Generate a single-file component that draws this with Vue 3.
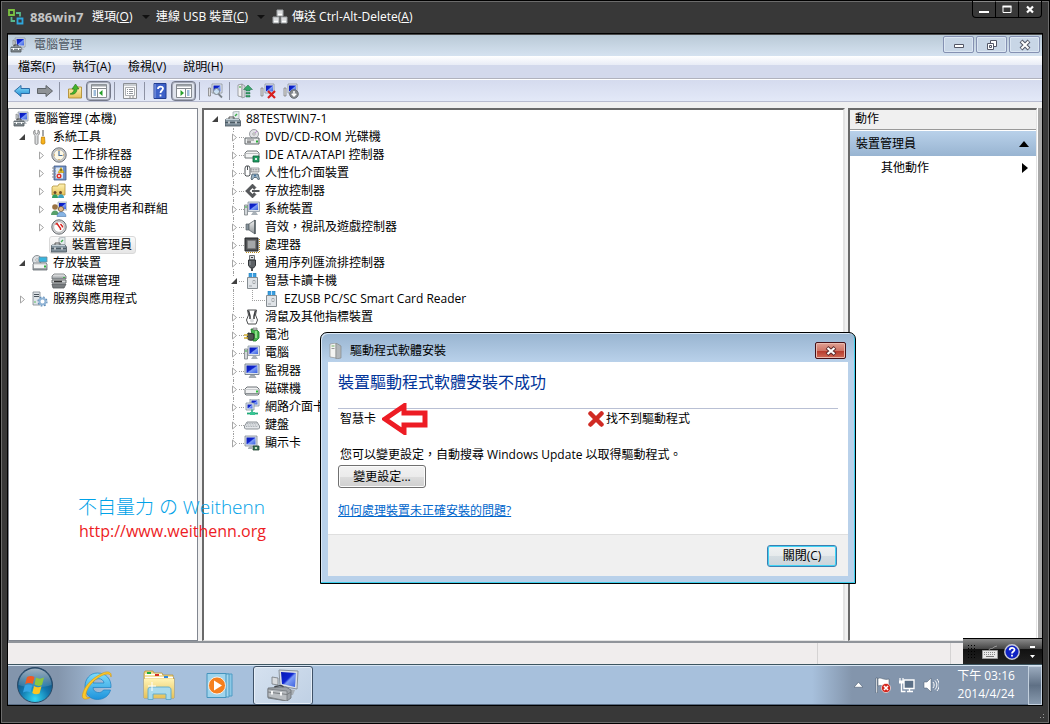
<script setup>
const tree = [
  { icon: 'compmgmt', text: '電腦管理 (本機)', level: 0 },
  { icon: 'tools', text: '系統工具', level: 1, arrow: 'open' },
  { icon: 'clock', text: '工作排程器', level: 2, arrow: 'shut' },
  { icon: 'event', text: '事件檢視器', level: 2, arrow: 'shut' },
  { icon: 'shared', text: '共用資料夾', level: 2, arrow: 'shut' },
  { icon: 'users', text: '本機使用者和群組', level: 2, arrow: 'shut' },
  { icon: 'perf', text: '效能', level: 2, arrow: 'shut' },
  { icon: 'devmgr', text: '裝置管理員', level: 2, selected: true },
  { icon: 'storage', text: '存放裝置', level: 1, arrow: 'open' },
  { icon: 'diskmgmt', text: '磁碟管理', level: 2 },
  { icon: 'services', text: '服務與應用程式', level: 1, arrow: 'shut' }
]
const devices = [
  { icon: 'devmgr', text: '88TESTWIN7-1', level: 0, arrow: 'open' },
  { icon: 'dvd', text: 'DVD/CD-ROM 光碟機', level: 1, arrow: 'shut' },
  { icon: 'ide', text: 'IDE ATA/ATAPI 控制器', level: 1, arrow: 'shut' },
  { icon: 'hid', text: '人性化介面裝置', level: 1, arrow: 'shut' },
  { icon: 'storctl', text: '存放控制器', level: 1, arrow: 'shut' },
  { icon: 'pc', text: '系統裝置', level: 1, arrow: 'shut' },
  { icon: 'sound', text: '音效，視訊及遊戲控制器', level: 1, arrow: 'shut' },
  { icon: 'cpu', text: '處理器', level: 1, arrow: 'shut' },
  { icon: 'usb', text: '通用序列匯流排控制器', level: 1, arrow: 'shut' },
  { icon: 'reader', text: '智慧卡讀卡機', level: 1, arrow: 'open' },
  { icon: 'reader', text: 'EZUSB PC/SC Smart Card Reader', level: 2 },
  { icon: 'mouse', text: '滑鼠及其他指標裝置', level: 1, arrow: 'shut' },
  { icon: 'battery', text: '電池', level: 1, arrow: 'shut' },
  { icon: 'pc', text: '電腦', level: 1, arrow: 'shut' },
  { icon: 'monitor', text: '監視器', level: 1, arrow: 'shut' },
  { icon: 'disk', text: '磁碟機', level: 1, arrow: 'shut' },
  { icon: 'network', text: '網路介面卡', level: 1, arrow: 'shut' },
  { icon: 'keyboard', text: '鍵盤', level: 1, arrow: 'shut' },
  { icon: 'display', text: '顯示卡', level: 1, arrow: 'shut', last: true }
]
const menus = ['檔案(F)', '執行(A)', '檢視(V)', '說明(H)']
const tools = [
  { icon: 'back', label: '上一頁' },
  { icon: 'forward', label: '下一頁' },
  { sep: true },
  { icon: 'folderup', label: '上移一層' },
  { icon: 'paneleft', label: '顯示或隱藏主控台樹狀目錄', on: true },
  { sep: true },
  { icon: 'props', label: '內容' },
  { sep: true },
  { icon: 'help', label: '說明' },
  { icon: 'paneright', label: '顯示或隱藏執行窗格', on: true },
  { sep: true },
  { icon: 'scan', label: '掃描硬體變更' },
  { sep: true },
  { icon: 'update', label: '更新驅動程式' },
  { icon: 'uninstall', label: '解除安裝' },
  { icon: 'disable', label: '停用' }
]
const apps = [
  { icon: 'ie', label: 'Internet Explorer' },
  { icon: 'explorer', label: '檔案總管' },
  { icon: 'wmp', label: 'Windows Media Player' },
  { icon: 'mmc', label: '電腦管理', on: true }
]
</script>

<template>
  <div class="viewer">
    <svg class="defs" aria-hidden="true">
      <defs>
        <linearGradient id="g-scr" x1="0" y1="0" x2="1" y2="1"><stop offset="0" stop-color="#0618b4" /><stop offset=".45" stop-color="#1026d0" /><stop offset=".55" stop-color="#7d9cf4" /><stop offset="1" stop-color="#3a60e0" /></linearGradient>
        <linearGradient id="g-metal" x1="0" y1="0" x2="0" y2="1"><stop offset="0" stop-color="#f4f4f4" /><stop offset="1" stop-color="#8c9296" /></linearGradient>
        <linearGradient id="g-fold" x1="0" y1="0" x2="0" y2="1"><stop offset="0" stop-color="#fff3b4" /><stop offset="1" stop-color="#e6c158" /></linearGradient>
        <linearGradient id="g-blue" x1="0" y1="0" x2="0" y2="1"><stop offset="0" stop-color="#8fdcf8" /><stop offset="1" stop-color="#1b8fd6" /></linearGradient>
        <radialGradient id="g-orb" cx=".5" cy=".9" r=".9"><stop offset="0" stop-color="#33d8f4" /><stop offset=".45" stop-color="#1277ae" /><stop offset="1" stop-color="#153a5e" /></radialGradient>
        <linearGradient id="g-gloss" x1="0" y1="0" x2="0" y2="1"><stop offset="0" stop-color="#fff" stop-opacity=".6" /><stop offset="1" stop-color="#fff" stop-opacity=".1" /></linearGradient>
        <linearGradient id="g-ie" x1="0" y1="0" x2="0" y2="1"><stop offset="0" stop-color="#7fdcfa" /><stop offset="1" stop-color="#1d93dc" /></linearGradient>
      </defs>

      <symbol id="i-compmgmt" viewBox="0 0 16 16"><path d="M5 1h10v9H6z" fill="#dfe5ea" stroke="#8c97a2" stroke-width=".8" /><path d="M6.500 2h7.500v6.500H7z" fill="url(#g-scr)" /><path d="M3 3l2 1v5l-2-1z" fill="#cfd4d8" stroke="#777" stroke-width=".6" /><path d="M9 10h3l2 3H9z" fill="#b5bcc2" /><path d="M4 9.500V8h4v1.500" fill="none" stroke="#444" /><path d="M1 10h10v5H1z" fill="#7b8489" stroke="#535a5f" stroke-width=".8" /><path d="M1 11.500h10" stroke="#d5dadc" /><path d="M3.500 11v2M8.500 11v2" stroke="#fff" /></symbol>
      <symbol id="i-tools" viewBox="0 0 16 16"><path d="M3 1L3 4l1.500 1L6 4V1c2 1 2 4 0 5.500V14c0 2-3 2-3 0V6.500C1 5 1 2 3 1z" fill="#dadcde" stroke="#777" stroke-width=".8" /><path d="M11 1v6" stroke="#888" stroke-width="1.500" /><path d="M9.500 8h3l.5 6c0 1.500-4 1.500-4 0z" fill="#f7b21c" stroke="#b97a00" stroke-width=".7" /></symbol>
      <symbol id="i-clock" viewBox="0 0 16 16"><circle cx="8" cy="8" r="7.200" fill="#c9cccf" stroke="#707579" /><circle cx="8" cy="8" r="5.300" fill="#fdf8e4" stroke="#999" stroke-width=".6" /><path d="M8 4v4.500h3.500" fill="none" stroke="#4870a0" stroke-width="1.200" /><path d="M8 3v1M8 12v1M3 8h1M12 8h1" stroke="#c58a30" /></symbol>
      <symbol id="i-event" viewBox="0 0 16 16"><path d="M3 1h12v14H3z" fill="#6f92c8" stroke="#3c5784" stroke-width=".8" /><path d="M4.500 2.500h7.500v11H4.500z" fill="#dbe6f6" /><path d="M1 3h4M1 6h4M1 9h4M1 12h4" stroke="#838a92" /><path d="M10 2.500l2.800 5H7.200z" fill="#ffd928" stroke="#b68a00" stroke-width=".6" /><path d="M10 4v2.500" stroke="#222" /><circle cx="8" cy="11" r="2.500" fill="#e03226" /><path d="M7 10l2 2m0-2l-2 2" stroke="#fff" stroke-width=".8" /></symbol>
      <symbol id="i-shared" viewBox="0 0 16 16"><path d="M1 4l1-1h5l1-2h6v11H1z" fill="url(#g-fold)" stroke="#b2943c" stroke-width=".8" /><circle cx="4" cy="9.500" r="1.500" fill="#6b4a28" /><circle cx="9.500" cy="9.500" r="1.500" fill="#6b4a28" /><path d="M1 15c0-5 6-5 6 0z" fill="#2f9e62" /><path d="M7 15c0-5 6-5 6 0z" fill="#3aa0bd" /></symbol>
      <symbol id="i-users" viewBox="0 0 16 16"><path d="M7 1h9v8H7z" fill="#dfe5ea" stroke="#8c97a2" stroke-width=".6" /><path d="M8 2h7v6H8z" fill="url(#g-scr)" /><circle cx="4" cy="6" r="2.800" fill="#9b7443" /><path d="M0 14c0-6 8-6 8 0z" fill="#58a06a" /><circle cx="10" cy="8" r="2.600" fill="#dfb98a" stroke="#6b4a28" stroke-width=".7" /><path d="M6 15.500c0-6 9-6 9 0z" fill="#86b4e4" stroke="#4c78ae" stroke-width=".6" /></symbol>
      <symbol id="i-perf" viewBox="0 0 16 16"><circle cx="8" cy="8" r="7.200" fill="#d2d4d6" stroke="#686c70" /><circle cx="8" cy="8" r="5.300" fill="#fff" stroke="#999" stroke-width=".6" /><path d="M4.500 5.500l1.500-1 3.500 5V11M9.500 5l2 2.500v1" fill="none" stroke="#d6201c" stroke-width="1.400" /></symbol>
      <symbol id="i-devmgr" viewBox="0 0 16 16"><path d="M8 1l6-1v8H8z" fill="#e5ebee" stroke="#9aa3a8" stroke-width=".7" /><path d="M12 3l-2 2" stroke="#3cae48" stroke-width="1.500" /><path d="M4 8V6h5v2" fill="none" stroke="#555" /><path d="M1 8h13l1.500 2v5H0v-5z" fill="#7d8d98" stroke="#46535c" stroke-width=".8" /><path d="M1 8.500h13" stroke="#c4d0d8" stroke-width="1.200" /><path d="M0 11.500h15" stroke="#4d5b64" /><path d="M4 10.500v2M11 10.500v2" stroke="#fff" stroke-width="1.300" /></symbol>
      <symbol id="i-storage" viewBox="0 0 16 16"><circle cx="5" cy="5" r="4.500" fill="#dde1e4" stroke="#8a9095" /><circle cx="5" cy="5" r="1.300" fill="#fff" stroke="#888" stroke-width=".6" /><path d="M7 2h8v5H7z" fill="#3ab4de" stroke="#6e8894" stroke-width=".8" /><path d="M1 9l1-1h12l1 1v6H1z" fill="url(#g-metal)" stroke="#666d72" stroke-width=".8" /><path d="M2 10h12v3H2z" fill="#f3f4f4" /><path d="M12 11.500h2" stroke="#31b33c" stroke-width="2" /></symbol>
      <symbol id="i-diskmgmt" viewBox="0 0 16 16"><path d="M1 3l2-2h10l2 2v3H1z" fill="url(#g-metal)" stroke="#6b6f72" stroke-width=".8" /><path d="M1 7h14v3H1z" fill="#d5d7d8" stroke="#54585b" stroke-width=".8" /><path d="M3 8.500h8" stroke="#333" stroke-width="1.500" /><path d="M1 11l1 4h11l2-4z" fill="#787c7f" stroke="#54585b" stroke-width=".8" /><path d="M12 4.500h2" stroke="#42b649" /></symbol>
      <symbol id="i-services" viewBox="0 0 16 16"><path d="M1 1h7v13H1z" fill="#dfe4e8" stroke="#7d868e" stroke-width=".8" /><path d="M2 3.500h5M2 5.500h5" stroke="#49535c" /><path d="M2.500 11h1" stroke="#31b33c" stroke-width="1.500" /><circle cx="10.500" cy="10.500" r="3" fill="#fff" stroke="#8fb3d5" stroke-width="2" /><circle cx="10.500" cy="10.500" r="4.500" fill="none" stroke="#5f8db8" stroke-width="1.200" stroke-dasharray="1.800 1.730" /></symbol>
      <symbol id="i-dvd" viewBox="0 0 16 16"><circle cx="10" cy="5" r="4.500" fill="#e2e2e6" stroke="#85898e" stroke-width=".8" /><path d="M10 5l3-3" stroke="#c58fd6" /><circle cx="10" cy="5" r="1.200" fill="#fff" stroke="#777" stroke-width=".6" /><path d="M1 9h14v6H1z" fill="#eceeef" stroke="#5c6266" /><path d="M3 11h7" stroke="#888" /><path d="M3 13h4" stroke="#333" /><path d="M12 12.500h2" stroke="#24ac30" stroke-width="2" /></symbol>
      <symbol id="i-ide" viewBox="0 0 16 16"><path d="M1 6l2-2h10l2 2v5H1z" fill="#f2f3f3" stroke="#73787b" /><path d="M1 6.500h14" stroke="#babdbf" /><path d="M9 9h6v6H9z" fill="#1f9d62" stroke="#0e5e38" stroke-width=".8" /><path d="M11 11h2v2h-2z" fill="#d7e8de" /></symbol>
      <symbol id="i-hid" viewBox="0 0 16 16"><path d="M2 1h3l1 2v7l-1 1H2l-1-1V3z" fill="#fff" stroke="#4e5357" /><path d="M3.500 1v4" stroke="#4e5357" /><path d="M7 3h8v4H7z" fill="#eee" stroke="#7b7f82" stroke-width=".7" /><path d="M7.500 4.500h7M7.500 6h7" stroke="#6b6f72" stroke-width=".7" stroke-dasharray="1 .6" /><path d="M7 14l1-5h6l1.500 5-1 1-2-2.500h-2.500L8 15z" fill="#9bb4c4" stroke="#455763" stroke-width=".8" /><circle cx="11" cy="10.500" r="1" fill="#3c6c9c" /></symbol>
      <symbol id="i-storctl" viewBox="0 0 16 16"><path d="M12 4.500L8.500 1 1.500 8l7 7 3.500-3.500L10.200 9.500 8.500 11.300 5.200 8l3.300-3.300 1.700 1.800z" fill="#55585b" stroke="#303335" stroke-width=".5" /><path d="M8 7h7.500v2H8z" fill="#55585b" /></symbol>
      <symbol id="i-pc" viewBox="0 0 16 16"><path d="M4 1h11.500v9.500H4z" fill="#dce2e8" stroke="#8c97a2" stroke-width=".8" /><path d="M5.500 2.500h8.500v6.500H5.500z" fill="url(#g-scr)" /><path d="M9 11h3l2 3H7z" fill="#a9b1b8" /><path d="M.5 4h3v10h-3z" fill="#d3d7da" stroke="#7a8084" stroke-width=".8" /><path d="M1 6h2" stroke="#31b33c" /></symbol>
      <symbol id="i-sound" viewBox="0 0 16 16"><path d="M2 5h3v6H2z" fill="#85919a" stroke="#596168" stroke-width=".7" /><path d="M5 5l6-4v14l-6-4z" fill="url(#g-metal)" stroke="#5c656b" stroke-width=".8" /><path d="M11 1v14" stroke="#3f484e" stroke-width="1.200" /></symbol>
      <symbol id="i-cpu" viewBox="0 0 16 16"><path d="M2 15.500h13.500V2" fill="none" stroke="#b88b1c" stroke-dasharray="1 1" /><path d="M1 1h13v13H1z" fill="#4e5154" stroke="#232527" /><path d="M3.500 3.500h8v8h-8z" fill="#a4a7a9" stroke="#777" stroke-width=".6" /></symbol>
      <symbol id="i-usb" viewBox="0 0 16 16"><path d="M5.500.5h5V5h-5z" fill="#dadcdd" stroke="#6b6f72" /><path d="M7 2.500h2" stroke="#444" /><path d="M4.500 5h7v5.500L9.500 13h-3l-2-2.500z" fill="#5d6266" stroke="#2e3235" /><path d="M6 6v4" stroke="#9a9fa3" /><path d="M8 13v3" stroke="#4a4e51" stroke-width="2" /></symbol>
      <symbol id="i-reader" viewBox="0 0 16 16"><path d="M5 0h7v6H5z" fill="#3a9ee0" stroke="#2478b2" stroke-width=".6" /><path d="M8.500 0v5" stroke="#bfe4ff" /><path d="M3.500 4.500h10V15.500h-10z" fill="#dfe3e7" stroke="#858c91" /><path d="M9 7.500h2v3H9z" fill="#fff" stroke="#7a8186" stroke-width=".6" /><path d="M5 13h3" stroke="#9ba1a6" /></symbol>
      <symbol id="i-mouse" viewBox="0 0 16 16"><path d="M3.500 1h9L11.500 6l2 5-1.500 4H4l-1.500-4 2-5z" fill="#fff" stroke="#4d4f51" /><path d="M4.500 1.500L6 7v3M11.500 1.500L10 7v3" fill="none" stroke="#3a3c3e" stroke-width="1.500" /><circle cx="8" cy="11.500" r="2" fill="#d9dbdd" /></symbol>
      <symbol id="i-battery" viewBox="0 0 16 16"><path d="M7 2h5l3 3v6l-3 3H9z" fill="#45b44c" stroke="#1d7327" stroke-width=".8" /><path d="M9 1h4v2H9z" fill="#c9ccce" stroke="#666" stroke-width=".6" /><path d="M12 4v7" stroke="#a5ea9c" stroke-width="1.500" /><path d="M4 6l6 1v4c0 3-6 3-7 0z" fill="#4f5552" stroke="#242826" /><path d="M0 8h4M0 11h4" stroke="#d2ad30" stroke-width="1.300" /></symbol>
      <symbol id="i-monitor" viewBox="0 0 16 16"><path d="M1 1h14v10.500H1z" fill="#dce2e8" stroke="#7e8993" /><path d="M2.500 2.500h11V10h-11z" fill="url(#g-scr)" /><path d="M7 12h3l2 2.500H5z" fill="#a9b1b8" stroke="#858d94" stroke-width=".6" /></symbol>
      <symbol id="i-disk" viewBox="0 0 16 16"><path d="M1 8l2-2h10l2 2v5l-1 1H2l-1-1z" fill="#f0f1f2" stroke="#6d7276" /><path d="M1 8.500h14" stroke="#c9cccf" /><path d="M1 12.500h14" stroke="#8b9094" /><path d="M12 10.500h2" stroke="#2cc239" stroke-width="2" /></symbol>
      <symbol id="i-network" viewBox="0 0 16 16"><path d="M6 0h9v7H6z" fill="#e4e9ee" stroke="#8290a0" stroke-width=".8" /><path d="M7.500 1.500h6v4h-6z" fill="url(#g-scr)" /><path d="M2 4h8v7H2z" fill="#e4e9ee" stroke="#8290a0" stroke-width=".8" /><path d="M3.500 5.500h5v4h-5z" fill="url(#g-scr)" /><path d="M3 14.500h11" stroke="#20a878" stroke-width="1.800" /><path d="M8 10.500v3" stroke="#20a878" stroke-width="1.500" /><path d="M6 13h5v3H6z" fill="#38c494" /></symbol>
      <symbol id="i-keyboard" viewBox="0 0 16 16"><path d="M3 5h10l2.500 4v2l-1 1H1.500l-1-1V9z" fill="#e4e7ea" stroke="#72797f" stroke-width=".8" /><path d="M3 6.500h10M2.500 8h11M2 9.500h12" stroke="#979ea4" stroke-width=".8" stroke-dasharray="1 .7" /></symbol>
      <symbol id="i-display" viewBox="0 0 16 16"><path d="M1 1h12v10H1z" fill="#dce2e8" stroke="#7e8993" stroke-width=".8" /><path d="M2.500 2.500h9v7h-9z" fill="url(#g-scr)" /><path d="M4 13l2-2h2v3H4z" fill="#a9b1b8" /><path d="M9 11h6v4H9z" fill="#3d7a5c" stroke="#1e3f2f" stroke-width=".8" /><path d="M11 12h2v2h-2z" fill="#c9e5c0" /></symbol>

      <symbol id="i-back" viewBox="0 0 16 16"><path d="M.5 8L7 2.500v3h8.500v5H7v3z" fill="url(#g-blue)" stroke="#2c6ca6" /></symbol>
      <symbol id="i-forward" viewBox="0 0 16 16"><path d="M15.500 8L9 2.500v3H.5v5H9v3z" fill="#8e9296" stroke="#5f6468" /></symbol>
      <symbol id="i-folderup" viewBox="0 0 16 16"><path d="M1.500 6h5l1-2h7v11h-13z" fill="url(#g-fold)" stroke="#b08f36" stroke-width=".9" /><path d="M3 11c3-1 4-3 4-5H5l3.500-5L12 6h-2c0 4-3 6-7 5z" fill="#43b32c" stroke="#277417" stroke-width=".6" /></symbol>
      <symbol id="i-paneleft" viewBox="0 0 16 16"><path d="M.5 1.500h15v13H.5z" fill="#fff" stroke="#868b90" /><path d="M1 2.500h14" stroke="#9ba0a6" stroke-width="2" /><path d="M1 5.500h14" stroke="#868b90" /><path d="M6.500 6v8" stroke="#868b90" /><path d="M2.500 8h2.500M2.500 10h2.500M2.500 12h2.500" stroke="#3d78b4" /><path d="M11.500 7v6L8 10z" fill="#28a02c" /></symbol>
      <symbol id="i-paneright" viewBox="0 0 16 16"><path d="M.5 1.500h15v13H.5z" fill="#fff" stroke="#868b90" /><path d="M1 2.500h14" stroke="#9ba0a6" stroke-width="2" /><path d="M1 5.500h14" stroke="#868b90" /><path d="M9.500 6v8" stroke="#868b90" /><path d="M11 8h2.500M11 10h2.500M11 12h2.500" stroke="#3d78b4" /><path d="M4.500 7v6L8 10z" fill="#28a02c" /></symbol>
      <symbol id="i-props" viewBox="0 0 16 16"><path d="M1.500.5h13v15h-13z" fill="#f8f8f8" stroke="#8c9095" /><path d="M2 2h12" stroke="#c9cdd1" stroke-width="2" /><path d="M3.500 4.500h9v8h-9z" fill="#fff" stroke="#9a9ea2" stroke-width=".8" /><path d="M5 6.500h1M5 8.500h1M5 10.500h1M7 6.500h4M7 8.500h4M7 10.500h4" stroke="#8f949a" /><path d="M7 14h2M10 14h2" stroke="#888" /></symbol>
      <symbol id="i-help" viewBox="0 0 16 16"><path d="M2 .5h12v15H2z" fill="#3c61c8" stroke="#233f92" /><path d="M3 1v14" stroke="#8fa6e6" stroke-width="1" /><path d="M6 6c0-3 5-3 5-.5 0 2-2.500 2-2.500 4.500" fill="none" stroke="#fff" stroke-width="1.800" /><path d="M7.600 11.500h1.800v2H7.600z" fill="#fff" /></symbol>
      <symbol id="i-scan" viewBox="0 0 16 16"><path d="M5 1h10v9H5z" fill="#e5e9ee" stroke="#8a939c" stroke-width=".8" /><path d="M6.500 2.500h7V8.500h-7z" fill="url(#g-scr)" /><path d="M1.500 5h2v8h-2z" fill="#ddd" stroke="#777" stroke-width=".7" /><circle cx="9.500" cy="8.500" r="3" fill="#cfe6f6" fill-opacity=".85" stroke="#7a828a" /><path d="M11.500 11l3.500 3.500" stroke="#7a828a" stroke-width="1.800" /></symbol>
      <symbol id="i-update" viewBox="0 0 16 16"><path d="M1 2l4-1v13l-4-1z" fill="#f3f3f3" stroke="#8a8e92" stroke-width=".8" /><path d="M5 1l3 2v11l-3 1z" fill="#d4d7d9" stroke="#8a8e92" stroke-width=".7" /><path d="M2 4h2" stroke="#28a02c" /><path d="M11 2l4.500 4.500H13V8H9V6.500H6.500zM9 9.500h4V11H9zM9 12.500h4V14H9z" fill="#35a86a" stroke="#1c6a40" stroke-width=".5" /></symbol>
      <symbol id="i-uninstall" viewBox="0 0 16 16"><path d="M5 1h9v9H5z" fill="#e5e9ee" stroke="#8a939c" stroke-width=".8" /><path d="M6 2.500h7V8.500H6z" fill="url(#g-scr)" /><path d="M1 5h2v8H1z" fill="#ddd" stroke="#777" stroke-width=".7" /><path d="M8 8l7 7m0-7l-7 7" stroke="#d81e1e" stroke-width="2.200" /></symbol>
      <symbol id="i-disable" viewBox="0 0 16 16"><path d="M5 1h9v9H5z" fill="#e5e9ee" stroke="#8a939c" stroke-width=".8" /><path d="M6 2.500h7V8.500H6z" fill="url(#g-scr)" /><path d="M1 5h2v8H1z" fill="#ddd" stroke="#777" stroke-width=".7" /><circle cx="11" cy="11" r="4.300" fill="#85898e" stroke="#6a6f74" /><path d="M11 8v5M8.800 10.800l2.200 2.200 2.200-2.200" fill="none" stroke="#fff" stroke-width="1.500" /></symbol>

      <symbol id="i-ie" viewBox="0 0 32 32"><path d="M16.500 4C25 4 30.500 10 30 18.500H12c.3 6 8.500 6.500 10.500 2.500h7C28 27 22.500 30.500 16.500 30.500 9 30.500 4 25 4 17.500S9 4 16.500 4zM12 14h11c-.5-5.500-10-6-11 0z" fill="url(#g-ie)" stroke="#1b7fc2" stroke-width=".7" fill-rule="evenodd" /><path d="M30 8c1.500-6-5-6.500-11-2.500C10 10 3 18 1.500 25.500c-1 5.500 3.500 5.500 7.500 3-3 .5-4.500-.5-4-3.500C6 18.500 12 11.500 20 7c5-2.500 9.500-3.500 10 1z" fill="#fbc82a" stroke="#d6970c" stroke-width=".6" /></symbol>
      <symbol id="i-explorer" viewBox="0 0 32 32"><path d="M1 4l1-2h8l1 2h8l1 2h10v3h1v20H1V4z" fill="#f0d682" stroke="#b9963c" stroke-width=".8" /><path d="M2 5.500h17M2 8.500h28" stroke="#fff" stroke-width="1.500" /><path d="M4 3h4v2H4z" fill="#1fae3a" /><path d="M12 5h4v2h-4z" fill="#d63024" /><path d="M21 7h4v2h-4z" fill="#3289dc" /><path d="M1 10h30v19H1z" fill="url(#g-fold)" /><path d="M5 30.500V21c0-2 1-3 3-3h17c2 0 3 1 3 3v9.500h-5V25H10v5.500z" fill="#a4daf2" stroke="#5ba9cc" stroke-width=".9" fill-opacity=".95" /><path d="M9 13v9M5 17h8" stroke="#fff" /></symbol>
      <symbol id="i-wmp" viewBox="0 0 32 32"><path d="M10 5h17v22H10z" fill="#8cc8e6" stroke="#4f9cc4" /><path d="M7 5h17v23H7z" fill="#a4d7ee" stroke="#4f9cc4" /><path d="M2 4.500h19v24H2z" fill="#9fd4ec" stroke="#4494bd" /><circle cx="12" cy="16.500" r="8.500" fill="#f5801f" stroke="#fff" stroke-width=".8" /><path d="M9 11.500l8 5-8 5z" fill="#fff" /></symbol>
      <symbol id="i-mmc" viewBox="0 0 32 32"><path d="M12 1l19 1-1 18-17-3z" fill="#dde1e6" stroke="#8a929a" /><path d="M14 3l15 1-1 14-13-3z" fill="url(#g-scr)" /><path d="M5 8l6 1v7l-6-1z" fill="#d8dbde" stroke="#74797e" stroke-width=".8" /><path d="M20 20l8 1-2 5h-6z" fill="#a9afb5" /><path d="M8 19.500v-2l6-1 2 1v2" fill="none" stroke="#44484c" stroke-width="1.400" /><path d="M1 19l18-1 5 3v8l-4 3-19-3z" fill="#9da2a7" stroke="#6a6f74" stroke-width=".8" /><path d="M1 20l19 2v10L1 28z" fill="#b9bdc1" stroke="#74797e" stroke-width=".8" /><path d="M1 23l19 2.500 4-2.500" fill="none" stroke="#7a7e82" /><path d="M5 22v3.500M14 23v3.500" stroke="#fff" stroke-width="1.800" /></symbol>
    </svg>

    <header class="vbar">
      <svg class="vlogo" viewBox="0 0 16 16"><path d="M1 1h5v5H1z" fill="none" stroke="#7cc242" stroke-width="1.800" /><path d="M9.500 9.500h5v5h-5z" fill="none" stroke="#2fa6dc" stroke-width="1.800" /><path d="M3.500 8v4H7M8 4h4v3.500" fill="none" stroke="#59b98a" stroke-width="1.800" /></svg>
      <strong class="vname">886win7</strong>
      <button class="vmenu vopt" type="button">選項(<u>O</u>)</button>
      <svg class="vtri" viewBox="0 0 8 4"><path d="M0 0h8L4 4z" /></svg>
      <button class="vmenu vusb" type="button">連線 USB 裝置(<u>C</u>)</button>
      <svg class="vtri" viewBox="0 0 8 4"><path d="M0 0h8L4 4z" /></svg>
      <svg class="vkeys" viewBox="0 0 16 16"><path d="M5 1h6v6H5zM1 8h6v6H1zM9 8h6v6H9z" fill="#d9dbdd" stroke="#a0a4a7" /><path d="M6 5.500h4M2 12.500h4M10 12.500h4" stroke="#fff" stroke-width="1.500" /></svg>
      <button class="vmenu vcad" type="button">傳送 Ctrl-Alt-Delete(<u>A</u>)</button>
      <div class="vctl">
        <button type="button" aria-label="最小化"><svg viewBox="0 0 12 12"><path d="M1 7h10v2H1z" fill="#fff" /></svg></button>
        <button type="button" aria-label="最大化"><svg viewBox="0 0 12 12"><path d="M2 2.500h8v6H2z" fill="none" stroke="#fff" /><path d="M1.500 2.500h9" stroke="#fff" stroke-width="2" /></svg></button>
        <button type="button" aria-label="關閉"><svg viewBox="0 0 12 12"><path d="M3 2.500l6 6m0-6l-6 6" stroke="#fff" stroke-width="2.200" /></svg></button>
      </div>
    </header>

    <main class="screen">
      <div class="ctitle">
        <svg class="ic"><use href="#i-compmgmt" /></svg>
        <span class="cname">電腦管理</span>
        <div class="cctl">
          <button type="button" aria-label="最小化"><svg viewBox="0 0 14 12"><path d="M2.500 5.500h9v3h-9z" fill="#fff" stroke="#535666" /></svg></button>
          <button type="button" aria-label="還原"><svg viewBox="0 0 14 12"><path d="M5.500 1.500h6v6h-6z" fill="#fff" stroke="#535666" /><path d="M2.500 4.500h6v6h-6z" fill="#fff" stroke="#535666" /><path d="M4.500 6.500h2v2h-2z" fill="none" stroke="#535666" /></svg></button>
          <button type="button" aria-label="關閉"><svg viewBox="0 0 14 12"><path d="M3 2l8 8m0-8l-8 8" stroke="#535666" stroke-width="4" /><path d="M3.500 2.500l7 7m0-7l-7 7" stroke="#fff" stroke-width="2" /></svg></button>
        </div>
      </div>
      <nav class="menubar"><button v-for="m in menus" :key="m" type="button">{{ m }}</button></nav>
      <div class="toolbar">
        <template v-for="(t, i) in tools" :key="i">
          <i v-if="t.sep" class="sep"></i>
          <button v-else type="button" :class="{ on: t.on }" :aria-label="t.label"><svg class="ic"><use :href="'#i-' + t.icon" /></svg></button>
        </template>
      </div>

      <div class="panes">
        <section class="pane left">
          <div v-for="(n, i) in tree" :key="i" class="node" :class="'l' + n.level">
            <span v-if="n.level" class="slot">
              <svg v-if="n.arrow === 'shut'" viewBox="0 0 8 9"><path d="M2.500 1v7l4-3.500z" fill="#fff" stroke="#a5a5a5" /></svg>
              <svg v-else-if="n.arrow" viewBox="0 0 8 9"><path d="M7 1v6H1z" fill="#404040" /></svg>
            </span>
            <span class="lab" :class="{ sel: n.selected }"><svg class="ic"><use :href="'#i-' + n.icon" /></svg>{{ n.text }}</span>
          </div>
        </section>

        <section class="pane mid">
          <div v-for="(n, i) in devices" :key="i" class="node" :class="['l' + n.level, { last: n.last }]">
            <span class="slot">
              <svg v-if="n.arrow === 'shut'" viewBox="0 0 8 9"><path d="M2.500 1v7l4-3.500z" fill="#fff" stroke="#a5a5a5" /></svg>
              <svg v-else-if="n.arrow" viewBox="0 0 8 9"><path d="M7 1v6H1z" fill="#404040" /></svg>
            </span>
            <span class="lab"><svg class="ic"><use :href="'#i-' + n.icon" /></svg>{{ n.text }}</span>
          </div>
        </section>

        <aside class="pane right">
          <div class="ahead">動作</div>
          <button class="agroup" type="button">裝置管理員<svg viewBox="0 0 10 6"><path d="M5 0l5 6H0z" /></svg></button>
          <button class="aitem" type="button">其他動作<svg viewBox="0 0 6 10"><path d="M0 0l6 5-6 5z" /></svg></button>
        </aside>
        <div class="strip"></div>
      </div>
      <div class="status"><i></i><i></i></div>

      <footer class="taskbar">
        <button class="orb" type="button" aria-label="開始">
          <svg viewBox="0 0 38 38"><circle cx="19" cy="19" r="17.500" fill="url(#g-orb)" stroke="#2c4a66" /><path d="M2.500 19a16.500 16.500 0 0133 0c-8 3-25 3-33 0z" fill="url(#g-gloss)" /><path d="M11 11c2.500-1.500 5-1.500 7.500 0l-1.800 7c-2.500-1.500-5-1.500-7.500 0z" fill="#ee5a24" /><path d="M20 11.500c2.500 1.500 5 1.500 8 0l-2 7.500c-2.500 1.500-5 1-7.500-.5z" fill="#8cc63e" /><path d="M8.800 19.500c2.500-1.500 5-1.500 7.500 0l-1.800 7c-2.500-1.500-5-1.500-7.500 0z" fill="#36a5e4" /><path d="M18 20c2.500 1.500 5 1.500 7.500.3l-2 7.200c-2.500 1.200-5 1-7.200-.5z" fill="#fdc520" /></svg>
        </button>
        <button v-for="a in apps" :key="a.icon" class="app" :class="{ on: a.on }" type="button" :aria-label="a.label"><svg><use :href="'#i-' + a.icon" /></svg></button>
        <div class="tray">
          <svg class="t-up" viewBox="0 0 8 5"><path d="M4 0l4 4.500H0z" fill="#fff" stroke="#46586c" stroke-width=".5" /></svg>
          <svg class="t-ic" viewBox="0 0 16 16"><path d="M1 1h1.500v15H1z" fill="#fff" stroke="#3a4a5c" stroke-width=".5" /><path d="M3 1.500c4-1.500 5 2 11 .5v7C9 11 7 7 3 9z" fill="#fff" stroke="#3a4a5c" stroke-width=".5" /><circle cx="11" cy="11" r="4.600" fill="#d3261c" stroke="#fff" stroke-width=".6" /><path d="M9 9l4 4m0-4l-4 4" stroke="#fff" stroke-width="1.600" /></svg>
          <svg class="t-ic" viewBox="0 0 16 16"><path d="M5 3h10v8.500H5z" fill="#5b6f86" stroke="#fff" stroke-width="1.400" /><path d="M8 14.500h6M10.500 12v3" stroke="#fff" stroke-width="1.400" /><path d="M1 1v3M4 1v3" stroke="#fff" stroke-width="1.200" /><path d="M0 3.500h5v3H0z" fill="#fff" /><path d="M2.500 6v8.500h4" fill="none" stroke="#fff" stroke-width="1.300" /></svg>
          <svg class="t-ic" viewBox="0 0 16 16"><path d="M1 5h3l4-4v14l-4-4H1z" fill="#fff" stroke="#4a5b6d" stroke-width=".5" /><path d="M10 5c1.500 2 1.500 4 0 6M12 3.500c2.500 3 2.500 6 0 9M14 2c3 4 3 8 0 12" fill="none" stroke="#fff" /></svg>
          <div class="time"><span>下午 03:16</span><span>2014/4/24</span></div>
          <button class="peek" type="button" aria-label="顯示桌面"></button>
        </div>
      </footer>

      <div class="langbar">
        <i class="grip"></i>
        <svg class="kb" viewBox="0 0 16 16"><path d="M7 7c0-4 3-1 5-4l3-1" fill="none" stroke="#999" /><path d="M.5 6.500h15v8H.5z" fill="#e8e8e8" stroke="#999" /><path d="M2 8.500h12M2 10.500h12" stroke="#888" stroke-dasharray="1 1" /><path d="M4 12.500h8" stroke="#777" /></svg>
        <svg class="hp" viewBox="0 0 16 16"><circle cx="8" cy="8" r="7.200" fill="#0f22c4" stroke="#c9cbd8" stroke-width="1.400" /><path d="M5.700 6.300c0-3.200 4.800-3 4.800-.5C10.500 7.500 8 7.500 8 9.500" fill="none" stroke="#fff" stroke-width="1.800" /><path d="M7.100 10.800h1.800v1.800H7.100z" fill="#fff" /></svg>
        <svg class="mn" viewBox="0 0 8 14"><path d="M1 1h5v2H1zM1 10h5l-2.500 3z" fill="#fff" /></svg>
      </div>

      <div class="mark"><span>不自量力 の Weithenn</span><a href="#">http://www.weithenn.org</a></div>

      <div class="dialog" role="dialog" aria-labelledby="dlg-title">
        <div class="dbar">
          <svg class="ic" viewBox="0 0 16 16"><path d="M2 1l6-1v15l-6-1z" fill="#f4f4f2" stroke="#8f9294" stroke-width=".7" /><path d="M8 0l5 3v12l-5 1z" fill="#b2b6b9" stroke="#85898b" stroke-width=".7" /><path d="M3.500 3h3" stroke="#70b060" /><path d="M3.500 5.500h3" stroke="#999" /></svg>
          <span id="dlg-title">驅動程式軟體安裝</span>
          <button type="button" aria-label="關閉"><svg viewBox="0 0 14 12"><path d="M3 2.500l8 7m0-7l-8 7" stroke="#5a2a2a" stroke-width="4" /><path d="M3.500 3l7 6m0-6l-7 6" stroke="#fff" stroke-width="2.200" /></svg></button>
        </div>
        <div class="dbody">
          <h1>裝置驅動程式軟體安裝不成功</h1>
          <div class="drow">
            <span class="dev">智慧卡<svg viewBox="0 0 46 32"><path d="M3 16L22 3v7h21v12H22v7z" fill="#fff" stroke="#ed1c24" stroke-width="5" /></svg></span>
            <span class="res"><svg viewBox="0 0 16 16"><path d="M2.500 2.500l11 11m0-11l-11 11" stroke="#d02b24" stroke-width="4.500" stroke-linecap="round" /></svg>找不到驅動程式</span>
          </div>
          <p>您可以變更設定，自動搜尋 Windows Update 以取得驅動程式。</p>
          <button class="chg" type="button">變更設定...</button>
          <a class="how" href="#">如何處理裝置未正確安裝的問題?</a>
        </div>
        <div class="dfoot"><button type="button">關閉(C)</button></div>
      </div>
    </main>
  </div>
</template>

<style>
body { background: #383838; }
</style>

<style scoped>
.viewer, .viewer * { box-sizing: border-box; }
.viewer {
  min-height: 100vh;
  display: flex;
  flex-direction: column;
  padding: 0 7px 18px;
  background: #383838;
  border: 1px solid #000;
  box-shadow: inset 0 0 0 1px #6c6c6c;
  font: 12px/18px "Open Sans", "Noto Sans CJK TC", sans-serif;
  color: #000;
  position: relative;
}
.viewer::after {
  content: "";
  position: absolute;
  right: 3px;
  bottom: 3px;
  width: 10px;
  height: 10px;
  background: radial-gradient(#999 1px, transparent 1px) 0 0 / 3px 3px;
  clip-path: polygon(100% 0, 100% 100%, 0 100%);
}
.defs { position: absolute; width: 0; height: 0; }
svg { flex: none; display: block; }
button { font: inherit; color: inherit; border: 0; background: none; padding: 0; margin: 0; white-space: nowrap; }
.ic { width: 16px; height: 16px; }

.vbar { height: 33px; display: flex; align-items: center; color: #fff; border-bottom: 1px solid #000; }
.vlogo { width: 16px; height: 16px; }
.vname { font-size: 13px; color: #c4c4c4; margin-left: 6px; width: 62px; }
.vopt { width: 48px; text-align: left; }
.vusb { width: 100px; text-align: left; margin-left: 8px; }
.vusb + .vtri { margin-left: 1px; }
.vtri { width: 8px; height: 4px; fill: #111; }
.vopt + .vtri { margin-left: 2px; margin-right: -2px; }
.vkeys { width: 16px; height: 16px; margin: 0 4px 0 7px; }
.vctl { margin-left: auto; align-self: flex-start; display: flex; border: 1px solid #000; border-top: 0; border-radius: 0 0 4px 4px; }
.vctl button { width: 22px; height: 16px; display: flex; justify-content: center; align-items: center; border-top: 1px solid #888; }
.vctl button + button { border-left: 1px solid #000; width: 23px; }
.vctl svg { width: 12px; height: 12px; }

.screen { flex: 1; display: flex; flex-direction: column; position: relative; background: #f0f0f0; border-top: 1px solid #4a4a4a; outline: 1px solid #000; }
.ctitle { height: 21px; display: flex; align-items: center; background: linear-gradient(#b9c9d6, #d5e2f0); padding: 0 2px 2px; }
.cname { margin-left: 8px; color: #4f5964; }
.cctl { margin-left: auto; display: flex; gap: 2px; }
.cctl button { width: 31px; height: 17px; border: 1px solid #8591b2; border-radius: 2px; background: #c8d6e6; box-shadow: inset 0 0 0 1px #dbe6f2; display: flex; align-items: center; justify-content: center; }
.cctl svg { width: 14px; height: 12px; }
.menubar { height: 23px; display: flex; gap: 17px; align-items: center; padding: 0 10px; background: linear-gradient(#fff, #e8ecf6 9px, #d3d9ec 9px); border-bottom: 1px solid #b0b2bd; }
.toolbar { height: 23px; display: flex; align-items: center; padding: 1px 2px 0; background: linear-gradient(#fff 1px, #d5dbee 1px, #e3e9f8); border-bottom: 1px solid #b8bcd0; }
.toolbar button { width: 23px; height: 20px; display: flex; align-items: center; justify-content: center; }
.toolbar button.on { width: 25px; border: 1px solid #74798a; border-radius: 4px; background: #dfe3ec; box-shadow: inset 0 0 0 1px #a4a9b8; }
.toolbar .sep { width: 1px; height: 18px; background: #8d92a4; margin: 0 3px; }

.panes { flex: 1; display: flex; padding-top: 6px; border-bottom: 2px solid #90949a; }
.pane { background: #fff; }
.left { flex: 0 0 190px; border: 1px solid #828790; margin-right: 4px; padding-top: 1px; }
.mid { flex: 1; min-width: 0; border: solid #696969; border-width: 2px 2px 1px 2px; border-right-color: #e3e3e3; border-bottom-color: #e3e3e3; margin-right: 3px; }
.right { flex: 0 0 189px; border: 2px solid #696969; border-right: 1px solid #e3e3e3; border-bottom: 1px solid #e3e3e3; }
.strip { width: 5px; background: #a8a8a8; border-left: 1px solid #fff; }
.node { height: 18px; display: flex; align-items: center; white-space: nowrap; position: relative; }
.left .l0 { padding-left: 2px; }
.left .l1 { padding-left: 9px; }
.left .l2 { padding-left: 28px; }
.mid .l0 { padding-left: 7px; }
.mid .l1 { padding-left: 26px; }
.mid .l2 { padding-left: 45px; }
.slot { width: 12px; height: 9px; position: relative; }
.slot svg { width: 8px; height: 9px; }
.lab { display: flex; align-items: center; gap: 5px; height: 18px; border: 1px solid transparent; padding: 0 1px; position: relative; }
.left .lab.sel { border-color: #d9d9d9; border-radius: 3px; background: linear-gradient(#fafafa, #e6e6e6); padding-right: 3px; }
.mid .l1::before, .mid .l2::before { content: ""; position: absolute; left: 29px; top: 0; bottom: 0; border-left: 1px dotted #a0a0a0; }
.mid .l1::after { content: ""; position: absolute; left: 35px; top: 9px; width: 5px; border-top: 1px dotted #a0a0a0; }
.mid .l2::after { content: ""; position: absolute; left: 48px; top: 0; width: 12px; height: 10px; border: dotted #a0a0a0; border-width: 0 0 1px 1px; }
.mid .l1 .slot svg { background: #fff; }
.mid .last::before { bottom: 9px; }
.ahead { height: 20px; background: #f0f0f0; padding-left: 5px; border-bottom: 1px solid #999; }
.agroup { width: 100%; height: 25px; margin-top: 1px; display: flex; justify-content: space-between; align-items: center; padding: 0 7px 0 6px; background: linear-gradient(#b9d1ea, #98b4d1); }
.agroup svg { width: 10px; height: 6px; }
.aitem { width: 100%; height: 24px; display: flex; justify-content: space-between; align-items: center; padding: 0 8px 0 31px; }
.aitem svg { width: 6px; height: 10px; }
.status { height: 21px; background: #f0eded; display: flex; justify-content: flex-end; padding-right: 91px; gap: 132px; }
.status i { width: 1px; background: #d5d3d3; }

.taskbar { height: 41px; display: flex; align-items: center; border-top: 1px solid #3d5560; box-shadow: inset 0 1px #d7e5f3, inset 0 -1px #5a6d84; background: linear-gradient(90deg, #8395ac, #8395ac 50px, #a7c0dc 100px, #a7c0dc calc(100% - 230px), #8395ac calc(100% - 190px)); }
.orb { margin: 0 18px 0 8px; }
.orb svg { width: 38px; height: 38px; }
.app { width: 60px; height: 39px; display: flex; align-items: center; justify-content: center; margin-right: 2px; border: 1px solid transparent; border-radius: 3px; }
.app svg { width: 32px; height: 32px; }
.app:nth-of-type(2) { margin-left: -5px; }
.app.on { margin-left: 0; border-color: #3f5268; background: linear-gradient(135deg, #d5e1ef, #bfd0e4); box-shadow: inset 0 0 0 1px #e6eef7; }
.tray { margin-left: auto; height: 100%; display: flex; align-items: center; color: #fff; }
.t-up { width: 9px; height: 6px; margin-right: 12px; }
.t-ic { width: 16px; height: 16px; margin-right: 8px; }
.time { display: flex; flex-direction: column; align-items: center; width: 78px; margin-right: 3px; }
.peek { width: 14px; height: 39px; border: 1px solid #c2cfdd; background: linear-gradient(#9aaabd, #5f7085 50%, #8799ad); }

.langbar { position: absolute; right: 0; bottom: 41px; width: 79px; height: 26px; border-top: 1px solid #000; background: linear-gradient(#8a8a8a, #444 10px, #111 10px, #222); display: flex; align-items: center; padding: 0 5px 0 4px; }
.grip { width: 8px; height: 16px; background: radial-gradient(#000 1px, transparent 1px) 0 0 / 3px 3px; }
.kb { width: 16px; height: 16px; margin-left: 7px; }
.hp { width: 16px; height: 16px; margin-left: 6px; }
.mn { width: 8px; height: 14px; margin-left: 9px; }

.mark { position: absolute; left: 70px; top: 460px; display: flex; flex-direction: column; color: #00a2e8; font-size: 19px; line-height: 24px; white-space: nowrap; }
.mark span { font-weight: 300; font-family: "Open Sans", "Noto Sans CJK TC", sans-serif; }
.mark a { font-size: 16px; color: #ed1c24; text-decoration: none; padding-left: 1px; }

.dialog { position: absolute; left: 312px; top: 297px; width: 536px; border: 1px solid #000; border-radius: 7px 7px 0 0; background: linear-gradient(#98b4d0, #b9d1ea 29px); padding: 0 7px 7px; box-shadow: inset -1px -1px #3fd0ee, inset 1px 1px #dbe8f5; }
.dbar { height: 29px; display: flex; align-items: center; padding-top: 6px; }
.dbar span { margin-left: 6px; }
.dbar button { margin-left: auto; margin-right: 2px; width: 31px; height: 17px; border: 1px solid #451016; border-radius: 2px; background: linear-gradient(#e0a194, #cf7566 50%, #b4372a 50%, #d06a55); box-shadow: inset 0 0 0 1px #eab9ae; display: flex; align-items: center; justify-content: center; }
.dbar button svg { width: 14px; height: 12px; }
.dbody { background: #fff; padding: 8px 10px 14px; display: flex; flex-direction: column; align-items: flex-start; }
h1 { margin: 0; font-size: 16px; line-height: 24px; font-weight: 400; color: #039; align-self: stretch; padding-bottom: 14px; border-bottom: 1px solid #b9c0d4; }
.drow { display: grid; grid-template-columns: 1fr 1fr; align-self: stretch; height: 36px; padding-left: 2px; }
.dev, .res { display: flex; align-items: center; height: 20px; }
.dev svg { width: 46px; height: 32px; margin-left: 6px; }
.res svg { width: 16px; height: 16px; margin-right: 2px; }
.res { margin-left: -1px; }
p { margin: 0; padding-left: 2px; line-height: 20px; }
.chg { width: 88px; height: 23px; border: 1px solid #707070; border-radius: 3px; background: linear-gradient(#f2f2f2, #ebebeb 50%, #ddd 50%, #cfcfcf); box-shadow: inset 0 0 0 1px #fbfbfb; }
.how { margin-top: 14px; color: #06c; }
.dfoot { height: 42px; border-top: 1px solid #dfdfdf; background: #f0f0f0; display: flex; justify-content: flex-end; align-items: center; padding: 0 11px; }
.dfoot button { width: 70px; height: 22px; border: 1px solid #3c7fb1; border-radius: 3px; background: linear-gradient(#f0f2f3, #e6eaec 50%, #d5dde2 50%, #cbd5db); box-shadow: inset 0 0 0 1px #3fd3f5; }
</style>
